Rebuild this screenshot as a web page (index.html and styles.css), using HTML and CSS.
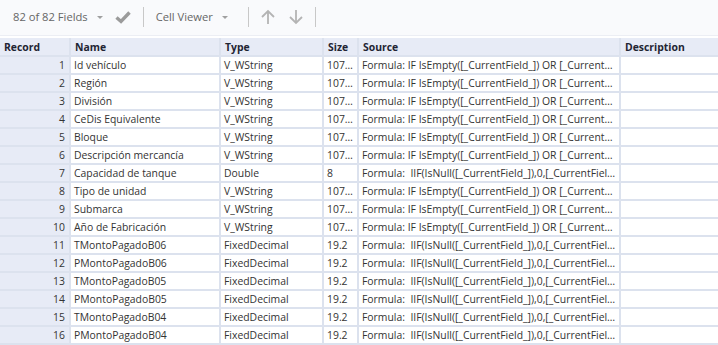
FILE: index.html
```html
<html>
  <head>
    <meta charset="utf-8" />
    <link rel="stylesheet" href="styles.css">
  </head>
  <body>
    <div class="toolbar">
      <span class="tb-label">82 of 82 Fields</span>
      <span class="caret"></span>
      <svg class="tb-icon check" width="16" height="14" viewBox="0 0 16 14">
        <path d="M1.5 7.5 L6 11.5 L14.5 2.5" fill="none" stroke="#9b9b9b" stroke-width="3.4" stroke-linejoin="miter"/>
      </svg>
      <span class="sep"></span>
      <span class="tb-label">Cell Viewer</span>
      <span class="caret"></span>
      <span class="sep"></span>
      <svg class="tb-icon" width="14" height="16" viewBox="0 0 14 16">
        <path d="M7 15 V2 M1 8 L7 2 L13 8" fill="none" stroke="#b4b4b4" stroke-width="1.8"/>
      </svg>
      <svg class="tb-icon down" width="14" height="16" viewBox="0 0 14 16">
        <path d="M7 1 V14 M1 8 L7 14 L13 8" fill="none" stroke="#b4b4b4" stroke-width="1.8"/>
      </svg>
      <span class="sep"></span>
    </div>

    <div class="grid">
      <div class="hd">Record</div>
      <div class="hd">Name</div>
      <div class="hd">Type</div>
      <div class="hd">Size</div>
      <div class="hd">Source</div>
      <div class="hd">Description</div>

      <div class="rec">1</div><div class="cell">Id vehículo</div><div class="cell">V_WString</div><div class="cell">1073741823</div><div class="cell">Formula: IF IsEmpty([_CurrentField_]) OR [_CurrentField_] = "" THEN "" ELSE [_CurrentField_] ENDIF</div><div class="cell"></div>
      <div class="rec">2</div><div class="cell">Región</div><div class="cell">V_WString</div><div class="cell">1073741823</div><div class="cell">Formula: IF IsEmpty([_CurrentField_]) OR [_CurrentField_] = "" THEN "" ELSE [_CurrentField_] ENDIF</div><div class="cell"></div>
      <div class="rec">3</div><div class="cell">División</div><div class="cell">V_WString</div><div class="cell">1073741823</div><div class="cell">Formula: IF IsEmpty([_CurrentField_]) OR [_CurrentField_] = "" THEN "" ELSE [_CurrentField_] ENDIF</div><div class="cell"></div>
      <div class="rec">4</div><div class="cell">CeDis Equivalente</div><div class="cell">V_WString</div><div class="cell">1073741823</div><div class="cell">Formula: IF IsEmpty([_CurrentField_]) OR [_CurrentField_] = "" THEN "" ELSE [_CurrentField_] ENDIF</div><div class="cell"></div>
      <div class="rec">5</div><div class="cell">Bloque</div><div class="cell">V_WString</div><div class="cell">1073741823</div><div class="cell">Formula: IF IsEmpty([_CurrentField_]) OR [_CurrentField_] = "" THEN "" ELSE [_CurrentField_] ENDIF</div><div class="cell"></div>
      <div class="rec">6</div><div class="cell">Descripción mercancía</div><div class="cell">V_WString</div><div class="cell">1073741823</div><div class="cell">Formula: IF IsEmpty([_CurrentField_]) OR [_CurrentField_] = "" THEN "" ELSE [_CurrentField_] ENDIF</div><div class="cell"></div>
      <div class="rec">7</div><div class="cell">Capacidad de tanque</div><div class="cell">Double</div><div class="cell">8</div><div class="cell">Formula:&nbsp; IIF(IsNull([_CurrentField_]),0,[_CurrentField_])</div><div class="cell"></div>
      <div class="rec">8</div><div class="cell">Tipo de unidad</div><div class="cell">V_WString</div><div class="cell">1073741823</div><div class="cell">Formula: IF IsEmpty([_CurrentField_]) OR [_CurrentField_] = "" THEN "" ELSE [_CurrentField_] ENDIF</div><div class="cell"></div>
      <div class="rec">9</div><div class="cell">Submarca</div><div class="cell">V_WString</div><div class="cell">1073741823</div><div class="cell">Formula: IF IsEmpty([_CurrentField_]) OR [_CurrentField_] = "" THEN "" ELSE [_CurrentField_] ENDIF</div><div class="cell"></div>
      <div class="rec">10</div><div class="cell">Año de Fabricación</div><div class="cell">V_WString</div><div class="cell">1073741823</div><div class="cell">Formula: IF IsEmpty([_CurrentField_]) OR [_CurrentField_] = "" THEN "" ELSE [_CurrentField_] ENDIF</div><div class="cell"></div>
      <div class="rec">11</div><div class="cell">TMontoPagadoB06</div><div class="cell">FixedDecimal</div><div class="cell">19.2</div><div class="cell">Formula:&nbsp; IIF(IsNull([_CurrentField_]),0,[_CurrentField_])</div><div class="cell"></div>
      <div class="rec">12</div><div class="cell">PMontoPagadoB06</div><div class="cell">FixedDecimal</div><div class="cell">19.2</div><div class="cell">Formula:&nbsp; IIF(IsNull([_CurrentField_]),0,[_CurrentField_])</div><div class="cell"></div>
      <div class="rec">13</div><div class="cell">TMontoPagadoB05</div><div class="cell">FixedDecimal</div><div class="cell">19.2</div><div class="cell">Formula:&nbsp; IIF(IsNull([_CurrentField_]),0,[_CurrentField_])</div><div class="cell"></div>
      <div class="rec">14</div><div class="cell">PMontoPagadoB05</div><div class="cell">FixedDecimal</div><div class="cell">19.2</div><div class="cell">Formula:&nbsp; IIF(IsNull([_CurrentField_]),0,[_CurrentField_])</div><div class="cell"></div>
      <div class="rec">15</div><div class="cell">TMontoPagadoB04</div><div class="cell">FixedDecimal</div><div class="cell">19.2</div><div class="cell">Formula:&nbsp; IIF(IsNull([_CurrentField_]),0,[_CurrentField_])</div><div class="cell"></div>
      <div class="rec">16</div><div class="cell">PMontoPagadoB04</div><div class="cell">FixedDecimal</div><div class="cell">19.2</div><div class="cell">Formula:&nbsp; IIF(IsNull([_CurrentField_]),0,[_CurrentField_])</div><div class="cell"></div>
    </div>
  </body>
</html>
```

FILE: styles.css
```css
body {
  margin: 0;
  background: #ffffff;
  font-family: "Open Sans", "Noto Sans", sans-serif;
  font-size: 10.4px;
  color: #333333;
  overflow: hidden;
}

.toolbar {
  display: flex;
  align-items: center;
  height: 36px;
  padding-left: 13px;
  padding-bottom: 2px;
  background: #f9fafc;
  border-bottom: 1px solid #eceef4;
  box-sizing: border-box;
}
.tb-label {
  font-size: 11.2px;
  color: #666666;
}
.caret {
  width: 0;
  height: 0;
  margin: 1px 8px 0 9px;
  border-left: 3px solid transparent;
  border-right: 3px solid transparent;
  border-top: 3px solid #a0a0a0;
}
.tb-icon {
  display: block;
}
.check {
  margin-left: 4px;
}
.down {
  margin-left: 14px;
}
.sep {
  width: 1px;
  height: 20px;
  background: #c8c8c8;
  margin: 0 12px 0 12px;
}

.grid {
  display: grid;
  grid-template-columns: 69px 148px 101px 33px 260px 1fr;
  grid-auto-rows: 16px;
  grid-template-rows: 17px;
  gap: 2px;
  margin-top: 2px;
  background: #dce2ee;
  padding-bottom: 2px;
}
.hd {
  background: #e7ebf6;
  font-weight: bold;
  color: #1f2533;
  padding-left: 4px;
  line-height: 18px;
  white-space: nowrap;
  overflow: hidden;
}
.rec {
  background: #e7ebf6;
  text-align: right;
  padding-right: 4px;
  line-height: 17px;
}
.cell {
  background: #ffffff;
  padding-left: 3px;
  padding-right: 2px;
  line-height: 17px;
  white-space: nowrap;
  overflow: hidden;
  text-overflow: ellipsis;
}
```
